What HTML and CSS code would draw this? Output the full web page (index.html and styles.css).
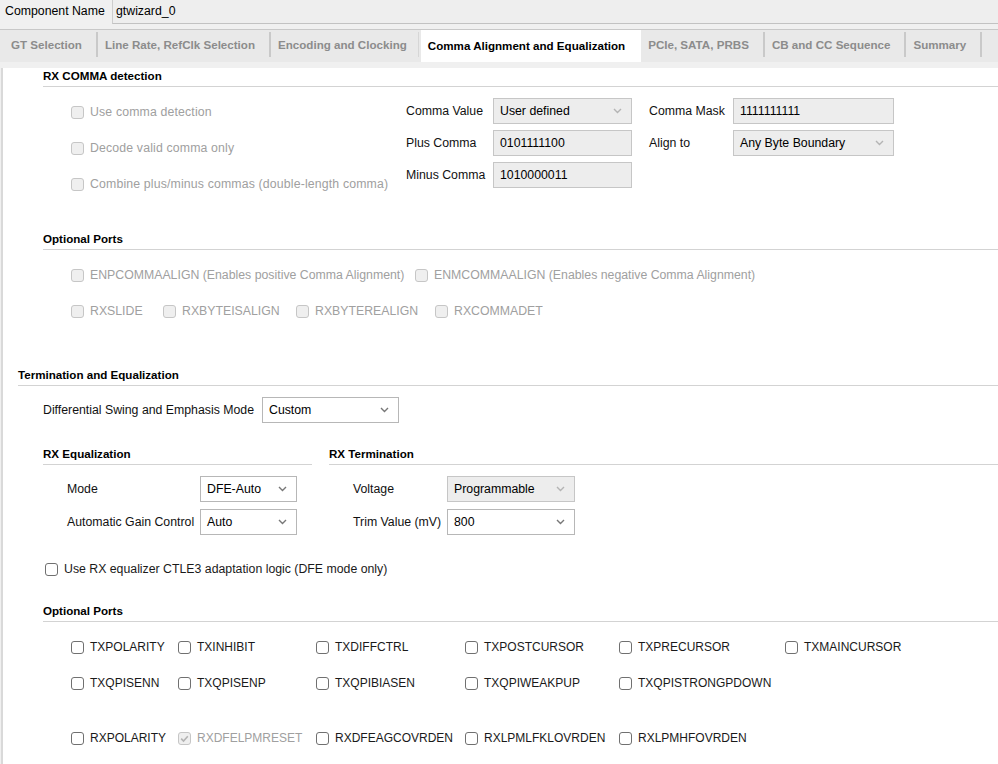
FILE: index.html
```html
<!DOCTYPE html>
<html>
<head>
<meta charset="utf-8">
<link rel="stylesheet" href="styles.css">
</head>
<body>
<div class="namebar">
  <div class="name-lbl">Component Name</div>
  <div class="name-val">gtwizard_0</div>
</div>
<div class="tabs">
  <div class="tab firsttab">GT Selection</div>
  <div class="tab">Line Rate, RefClk Selection</div>
  <div class="tab pre">Encoding and Clocking</div>
  <div class="tab active">Comma Alignment and Equalization</div>
  <div class="tab">PCIe, SATA, PRBS</div>
  <div class="tab">CB and CC Sequence</div>
  <div class="tab">Summary</div>
</div>
<div class="panel">
  <div class="indent">
    <div class="hdr first">RX COMMA detection</div>
    <div class="comma">
      <div class="cbcol">
        <div class="cbrow"><span class="box dis"></span><span class="lbl dis">Use comma detection</span></div>
        <div class="cbrow"><span class="box dis"></span><span class="lbl dis">Decode valid comma only</span></div>
        <div class="cbrow"><span class="box dis"></span><span class="lbl dis">Combine plus/minus commas (double-length comma)</span></div>
      </div>
      <div class="fields">
        <div class="flbl">Comma Value</div>
        <div class="sel dis"><span>User defined</span><svg width="9" height="6" viewBox="0 0 9 6"><path d="M1 1l3.5 3.5L8 1" fill="none" stroke="currentColor" stroke-width="1.4"/></svg></div>
        <div></div>
        <div class="flbl">Comma Mask</div>
        <div class="inp dis">1111111111</div>
        <div class="flbl">Plus Comma</div>
        <div class="inp dis">0101111100</div>
        <div></div>
        <div class="flbl">Align to</div>
        <div class="sel dis"><span>Any Byte Boundary</span><svg width="9" height="6" viewBox="0 0 9 6"><path d="M1 1l3.5 3.5L8 1" fill="none" stroke="currentColor" stroke-width="1.4"/></svg></div>
        <div class="flbl">Minus Comma</div>
        <div class="inp dis">1010000011</div>
      </div>
    </div>

    <div class="hdr opt1">Optional Ports</div>
    <div class="ports1">
      <div class="cbrow r1">
        <div class="item"><span class="box dis"></span><span class="lbl dis">ENPCOMMAALIGN (Enables positive Comma Alignment)</span></div>
        <div class="item"><span class="box dis"></span><span class="lbl dis">ENMCOMMAALIGN (Enables negative Comma Alignment)</span></div>
      </div>
      <div class="cbrow r2">
        <div class="item"><span class="box dis"></span><span class="lbl dis">RXSLIDE</span></div>
        <div class="item"><span class="box dis"></span><span class="lbl dis">RXBYTEISALIGN</span></div>
        <div class="item"><span class="box dis"></span><span class="lbl dis">RXBYTEREALIGN</span></div>
        <div class="item"><span class="box dis"></span><span class="lbl dis">RXCOMMADET</span></div>
      </div>
    </div>
  </div>

  <div class="hdr term">Termination and Equalization</div>
  <div class="indent">
    <div class="diffrow">
      <div class="diff-lbl">Differential Swing and Emphasis Mode</div>
      <div class="sel en w137"><span>Custom</span><svg width="9" height="6" viewBox="0 0 9 6"><path d="M1 1l3.5 3.5L8 1" fill="none" stroke="currentColor" stroke-width="1.4"/></svg></div>
    </div>
    <div class="subs">
      <div class="sub left">
        <div class="hdr">RX Equalization</div>
        <div class="subgrid eq">
          <div class="flbl">Mode</div>
          <div class="sel en"><span>DFE-Auto</span><svg width="9" height="6" viewBox="0 0 9 6"><path d="M1 1l3.5 3.5L8 1" fill="none" stroke="currentColor" stroke-width="1.4"/></svg></div>
          <div class="flbl">Automatic Gain Control</div>
          <div class="sel en"><span>Auto</span><svg width="9" height="6" viewBox="0 0 9 6"><path d="M1 1l3.5 3.5L8 1" fill="none" stroke="currentColor" stroke-width="1.4"/></svg></div>
        </div>
      </div>
      <div class="sub right">
        <div class="hdr">RX Termination</div>
        <div class="subgrid tm">
          <div class="flbl">Voltage</div>
          <div class="sel dis"><span>Programmable</span><svg width="9" height="6" viewBox="0 0 9 6"><path d="M1 1l3.5 3.5L8 1" fill="none" stroke="currentColor" stroke-width="1.4"/></svg></div>
          <div class="flbl">Trim Value (mV)</div>
          <div class="sel en"><span>800</span><svg width="9" height="6" viewBox="0 0 9 6"><path d="M1 1l3.5 3.5L8 1" fill="none" stroke="currentColor" stroke-width="1.4"/></svg></div>
        </div>
      </div>
    </div>
    <div class="cbrow ctle"><span class="box"></span><span class="lbl">Use RX equalizer CTLE3 adaptation logic (DFE mode only)</span></div>

    <div class="hdr opt2">Optional Ports</div>
    <div class="portgrid tx">
      <div class="item"><span class="box"></span><span class="lbl">TXPOLARITY</span></div>
      <div class="item"><span class="box"></span><span class="lbl">TXINHIBIT</span></div>
      <div class="item"><span class="box"></span><span class="lbl">TXDIFFCTRL</span></div>
      <div class="item"><span class="box"></span><span class="lbl">TXPOSTCURSOR</span></div>
      <div class="item"><span class="box"></span><span class="lbl">TXPRECURSOR</span></div>
      <div class="item"><span class="box"></span><span class="lbl">TXMAINCURSOR</span></div>
      <div class="item"><span class="box"></span><span class="lbl">TXQPISENN</span></div>
      <div class="item"><span class="box"></span><span class="lbl">TXQPISENP</span></div>
      <div class="item"><span class="box"></span><span class="lbl">TXQPIBIASEN</span></div>
      <div class="item"><span class="box"></span><span class="lbl">TXQPIWEAKPUP</span></div>
      <div class="item"><span class="box"></span><span class="lbl">TXQPISTRONGPDOWN</span></div>
    </div>
    <div class="portgrid rx">
      <div class="item"><span class="box"></span><span class="lbl">RXPOLARITY</span></div>
      <div class="item"><span class="box dis chk"><svg width="11" height="11" viewBox="0 0 11 11"><path d="M2.2 5.6l2.3 2.4 4.3-4.8" fill="none" stroke="currentColor" stroke-width="1.6"/></svg></span><span class="lbl dis">RXDFELPMRESET</span></div>
      <div class="item"><span class="box"></span><span class="lbl">RXDFEAGCOVRDEN</span></div>
      <div class="item"><span class="box"></span><span class="lbl">RXLPMLFKLOVRDEN</span></div>
      <div class="item"><span class="box"></span><span class="lbl">RXLPMHFOVRDEN</span></div>
    </div>
  </div>
</div>
</body>
</html>
```
FILE: styles.css
```css
* { box-sizing: border-box; }
html, body { margin: 0; padding: 0; }
body {
  width: 998px;
  height: 764px;
  overflow: hidden;
  background: #f0f0f0;
  font-family: "Liberation Sans", Arial, sans-serif;
  font-size: 12.3px;
  color: #1a1a1a;
}

/* component name */
.namebar { display: flex; height: 24px; }
.name-lbl { width: 112px; padding-left: 5px; line-height: 22px; color: #000; }
.name-val {
  flex: 1;
  background: #eeeeee;
  border-left: 1px solid #cdcdcd;
  border-bottom: 1px solid #c2c2c2;
  padding-left: 3px;
  line-height: 23px;
  color: #000;
}

/* tabs */
.tabs {
  margin-top: 5px;
  height: 33px;
  border-top: 1px solid #c8c8c8;
  background: #e9e9e9;
  display: flex;
  align-items: flex-start;
  padding-left: 3px;
}
.tab {
  margin-top: 2px;
  height: 25px;
  line-height: 26px;
  padding: 0 14px 0 7px;
  border-right: 2px solid #c9c9c9;
  font-weight: bold;
  font-size: 11.6px;
  color: #8c8c8c;
  white-space: nowrap;
}
.tab.firsttab { padding-left: 8px; }
.tab.pre { border-right: 1px solid #d6d6d6; padding-right: 11px; margin-right: 2px; }
.tab.active {
  margin-top: 0;
  height: 32px;
  line-height: 32px;
  background: #fff;
  color: #000;
  border-right: none;
  padding: 0 16px 0 7px;
}

/* panel */
.panel {
  height: 700px;
  margin-left: 1px;
  background: #fff;
  border-left: 2px solid #d9d9d9;
  border-bottom: 2px solid #dadada;
  padding-left: 15px;
}
.indent { margin-left: 25px; }

.hdr {
  font-weight: bold;
  font-size: 11.6px;
  color: #000;
  line-height: 16px;
  padding-bottom: 2px;
  border-bottom: 1px solid #d3d3d3;
  white-space: nowrap;
}
.hdr.first { margin-top: 6px; }
.hdr.opt1 { margin-top: 29px; }
.hdr.term { margin-top: 38px; }
.hdr.opt2 { margin-top: 16px; }

/* checkbox */
.cbrow { display: flex; align-items: center; height: 36px; }
.item { display: flex; align-items: center; white-space: nowrap; }
.box {
  flex: none;
  width: 13px;
  height: 13px;
  border: 1px solid #707070;
  border-radius: 3px;
  background: #fff;
  margin-right: 6px;
  display: flex;
  align-items: center;
  justify-content: center;
}
.box.dis { border-color: #c6c6c6; background: #efefef; }
.box.chk { color: #b3b3b3; }
.lbl { color: #1a1a1a; white-space: nowrap; }
.lbl.dis { color: #a0a0a0; }

/* comma section */
.comma { display: flex; }
.cbcol { width: 363px; padding: 7px 0 0 28px; }
.cbcol .lbl.dis { letter-spacing: 0.15px; }
.fields {
  padding-top: 11px;
  display: grid;
  grid-template-columns: 87px 139px 17px 84px 161px;
  grid-auto-rows: 26px;
  row-gap: 6px;
  align-items: center;
}
.flbl { color: #111; white-space: nowrap; }

.sel, .inp {
  height: 26px;
  display: flex;
  align-items: center;
  justify-content: space-between;
  padding: 0 9px 0 6px;
  border: 1px solid #b7b7b7;
  background: #fff;
  color: #000;
  white-space: nowrap;
}
.sel svg { flex: none; color: #777; }
.sel.dis, .inp.dis { background: #ededed; border-color: #c6c6c6; }
.sel.dis svg { color: #b4b4b4; }

.ports1 { padding-top: 7px; padding-left: 28px; }
.ports1 .cbrow { display: grid; align-items: center; }
.r1 { grid-template-columns: 344px auto; }
.r2 { grid-template-columns: 92px 133px 139px auto; }

/* termination */
.diffrow { margin-top: 11px; display: flex; align-items: center; }
.diff-lbl { width: 219px; white-space: nowrap; color: #111; }
.w137 { width: 137px; }

.subs { margin-top: 23px; display: flex; }
.sub.left { width: 269px; }
.sub.right { flex: 1; margin-left: 17px; }
.subgrid {
  margin-top: 11px;
  padding-left: 24px;
  display: grid;
  grid-auto-rows: 26px;
  row-gap: 7px;
  align-items: center;
}
.subgrid.eq { grid-template-columns: 133px 97px; }
.subgrid.tm { grid-template-columns: 94px 128px; }

.ctle { margin-top: 16px; padding-left: 2px; }

.portgrid {
  padding-left: 28px;
  display: grid;
  grid-template-columns: 107px 138px 149px 154px 166px auto;
  grid-auto-rows: 36px;
  align-items: center;
}
.portgrid .lbl { font-size: 12px; }
.portgrid.tx { padding-top: 7px; }
.portgrid.rx { margin-top: 19px; }
```
